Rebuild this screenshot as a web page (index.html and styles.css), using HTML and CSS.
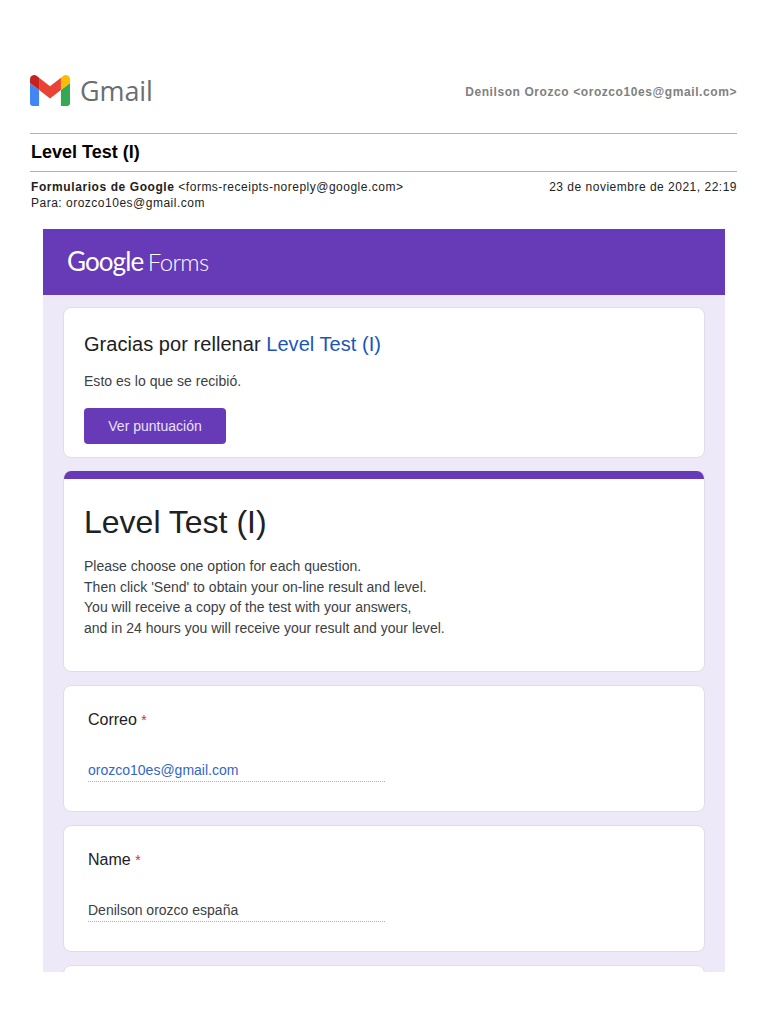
FILE: index.html
```html
<!DOCTYPE html>
<html lang="es">
<head>
<meta charset="utf-8">
<title>Level Test (I)</title>
<link rel="stylesheet" href="styles.css">
</head>
<body>
<div class="page">
  <header class="top">
    <div class="brand">
      <svg class="m-logo" viewBox="52 42 88 66" width="40" height="31" preserveAspectRatio="none" aria-hidden="true">
        <path fill="#4285f4" d="M58 108h14V74L52 59v43c0 3.320 2.690 6 6 6"/>
        <path fill="#34a853" d="M120 108h14c3.320 0 6-2.690 6-6V59l-20 15"/>
        <path fill="#fbbc04" d="M120 48v26l20-15v-8c0-7.420-8.470-11.650-14.400-7.200"/>
        <path fill="#ea4335" d="M72 74V48l24 18 24-18v26L96 92"/>
        <path fill="#c5221f" d="M52 51v8l20 15V48l-5.600-4.200c-5.940-4.450-14.400-.22-14.400 7.200"/>
      </svg>
      <span class="wordmark">Gmail</span>
    </div>
    <div class="account">Denilson Orozco &lt;orozco10es@gmail.com&gt;</div>
  </header>
  <h1 class="subject">Level Test (I)</h1>
  <div class="meta">
    <div class="meta-left">
      <div><b>Formularios de Google</b> &lt;forms-receipts-noreply@google.com&gt;</div>
      <div>Para: orozco10es@gmail.com</div>
    </div>
    <div class="meta-date">23 de noviembre de 2021, 22:19</div>
  </div>
  <main class="panel">
    <div class="banner"><span class="g">Google</span> <span class="f">Forms</span></div>
    <div class="stack">
      <section class="card thanks">
        <h2>Gracias por rellenar <a href="#">Level Test (I)</a></h2>
        <p>Esto es lo que se recibió.</p>
        <a class="btn" href="#">Ver puntuación</a>
      </section>
      <section class="card intro">
        <div class="band"></div>
        <h3>Level Test (I)</h3>
        <p>Please choose one option for each question.<br>Then click 'Send' to obtain your on-line result and level.<br>You will receive a copy of the test with your answers,<br>and in 24 hours you will receive your result and your level.</p>
      </section>
      <section class="card field">
        <div class="label">Correo <span class="req">*</span></div>
        <div class="value link">orozco10es@gmail.com</div>
      </section>
      <section class="card field">
        <div class="label">Name <span class="req">*</span></div>
        <div class="value">Denilson orozco españa</div>
      </section>
      <section class="card field"></section>
    </div>
  </main>
</div>
</body>
</html>
```

FILE: styles.css
```css
html, body { margin: 0; padding: 0; background: #fff; }
body { font-family: "Liberation Sans", Arial, sans-serif; color: #202124; }
.page { width: 768px; height: 1024px; overflow: hidden; padding: 75px 31px 0 30px; box-sizing: border-box; }

.top { display: flex; justify-content: space-between; align-items: center; height: 31px; }
.brand { display: flex; align-items: center; gap: 10px; }
.m-logo { display: block; }
.wordmark { font-family: "Open Sans", sans-serif; font-size: 27px; line-height: 31px; color: #6a6e72; letter-spacing: -0.1px; }
.account { font-size: 12px; font-weight: 700; color: #808080; letter-spacing: 0.58px; padding-top: 3px; }

.subject { margin: 27px 0 0; height: 37px; padding-left: 1px; border-top: 1px solid #b0b0b0; border-bottom: 1px solid #b0b0b0; font-size: 18px; line-height: 37px; font-weight: 700; color: #000; }

.meta { display: flex; justify-content: space-between; margin-top: 7px; padding-left: 1px; font-size: 12px; line-height: 16px; color: #222; height: 50px; letter-spacing: 0.5px; }
.meta-left b { letter-spacing: 0.58px; }

.panel { width: 682px; height: 743px; margin-left: 13px; background: #ede9f8; overflow: hidden; }
.banner { height: 66px; box-sizing: border-box; background: #673ab7; color: #fff; padding-left: 24px; line-height: 64px; white-space: nowrap; }
.banner .g { font-family: Lato, sans-serif; font-size: 26px; letter-spacing: -0.9px; }
.banner .f { font-family: Lato, sans-serif; font-size: 24px; font-weight: 300; letter-spacing: -0.6px; }

.stack { display: flex; flex-direction: column; gap: 13px; padding: 12px 20px 0; }
.card { background: #fff; border: 1px solid #dfdde6; border-radius: 8px; box-sizing: border-box; overflow: hidden; flex: none; }

.thanks { height: 151px; padding: 20px 20px 0; }
.thanks h2 { margin: 0; font-size: 20px; line-height: 32px; font-weight: 400; color: #202124; letter-spacing: 0.05px; }
.thanks h2 a { color: #1a56b8; text-decoration: none; }
.thanks p { margin: 11px 0 0; font-size: 14px; line-height: 20px; color: #3c4043; letter-spacing: 0.03px; }
.btn { display: block; width: 142px; height: 36px; margin-top: 17px; border-radius: 4px; background: #673ab7; color: #e9e1f7; font-size: 14px; line-height: 36px; text-align: center; text-decoration: none; }

.intro { height: 201px; border-top: 0; }
.band { height: 8px; background: #673ab7; }
.intro h3 { margin: 20px 20px 0; font-size: 32px; line-height: 46px; font-weight: 400; color: #202124; }
.intro p { margin: 11px 20px 0; font-size: 14px; line-height: 20.5px; color: #3c4043; letter-spacing: 0.02px; }

.field { height: 127px; padding: 24px 24px 0; }
.label { font-size: 16px; line-height: 20px; color: #202124; }
.req { color: #d93025; font-size: 14px; }
.value { width: 297px; margin-top: 30px; height: 21px; font-size: 14px; line-height: 20px; color: #3c4043; border-bottom: 1px dotted #b0b0b0; }
.link { color: #3367c4; }
```
